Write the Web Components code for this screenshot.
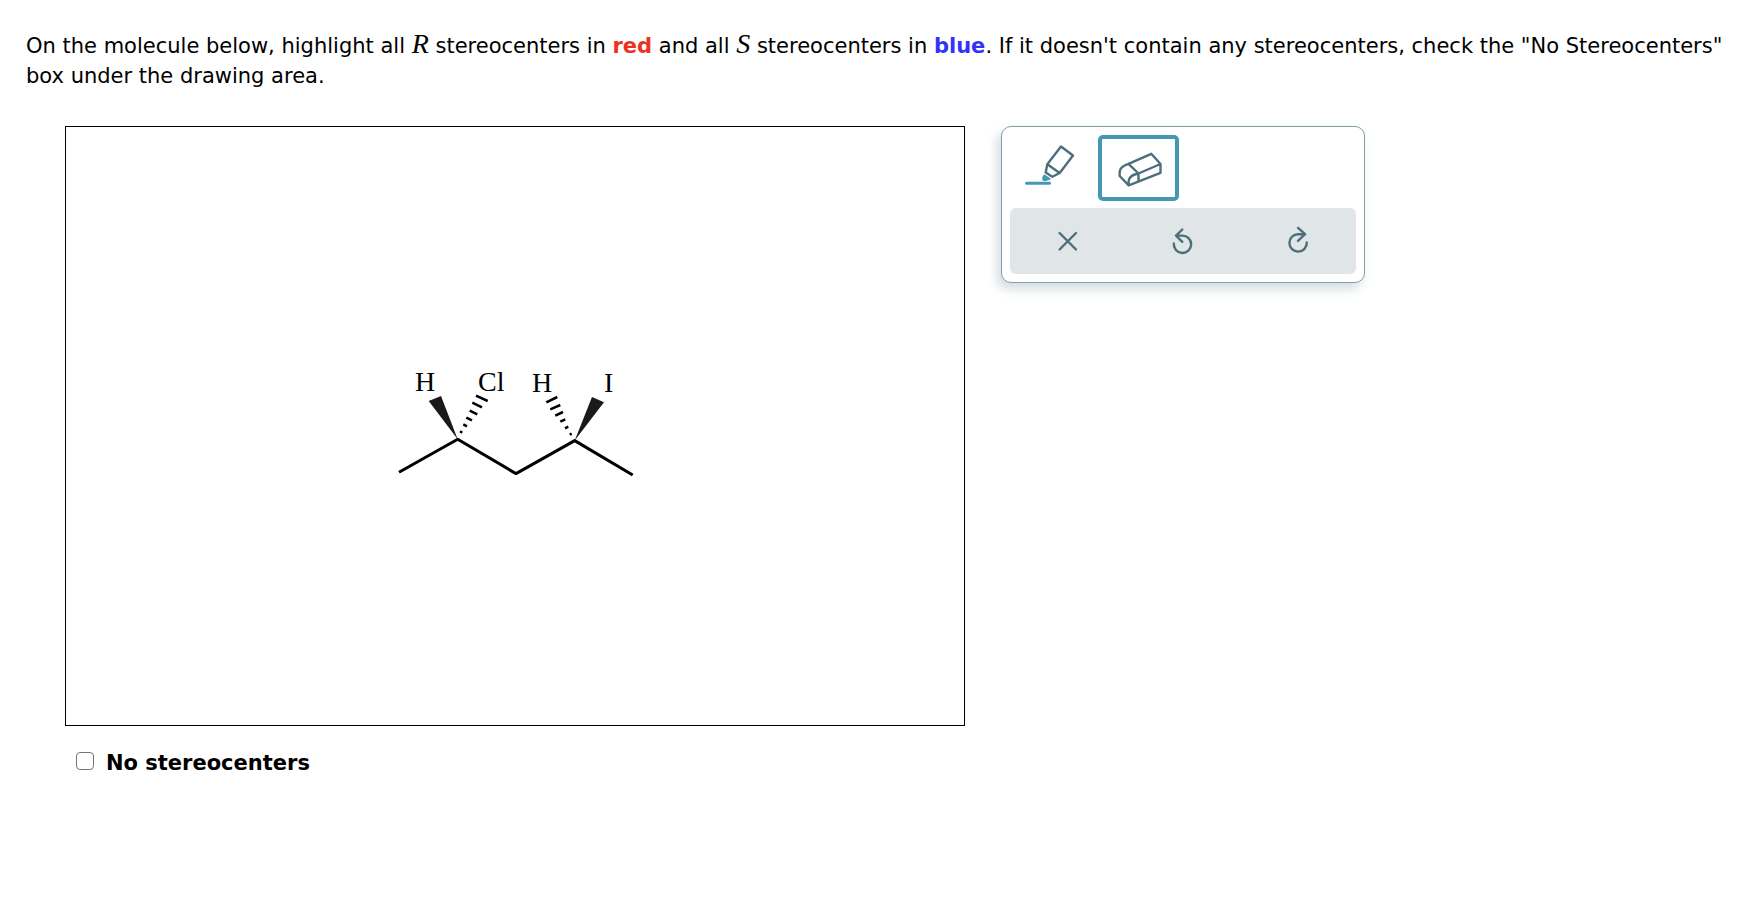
<!DOCTYPE html>
<html lang="en">
<head>
<meta charset="utf-8">
<title>Stereocenters</title>
<style>
  body { margin: 0; background: #fff; color: #000; font: 21px/30px Verdana, "DejaVu Sans", sans-serif; }
</style>
</head>
<body>
<stereo-question>
  <question-prompt slot="prompt">On the molecule below, highlight all <i>R</i> stereocenters in <b class="red">red</b> and all <i>S</i> stereocenters in <b class="blue">blue</b>. If it doesn't contain any stereocenters, check the "No Stereocenters" <span>box under the drawing area.</span></question-prompt>
  <molecule-canvas slot="canvas"></molecule-canvas>
  <tool-palette slot="tools"></tool-palette>
  <check-option slot="option">No stereocenters</check-option>
</stereo-question>
<script>
function define(name, html) {
  const template = document.createElement('template');
  template.innerHTML = html;
  customElements.define(name, class extends HTMLElement {
    constructor() {
      super();
      this.attachShadow({ mode: 'open' }).append(template.content.cloneNode(true));
    }
  });
}

define('stereo-question', `
<style>
  :host { display: block; padding: 31px 16px 31px 26px; }
  .work { display: grid; grid-template-columns: minmax(0, 900px) minmax(300px, 364px); column-gap: 36px; row-gap: 20px; align-items: start; padding: 35px 0 0 39px; }
</style>
<main>
  <slot name="prompt"></slot>
  <div class="work">
    <slot name="canvas"></slot>
    <slot name="tools"></slot>
    <slot name="option"></slot>
  </div>
</main>`);

define('question-prompt', `
<style>
  :host { display: block; }
  p { margin: 0; }
  ::slotted(i) { font: italic 28px/24px "Liberation Serif", "Times New Roman", serif; }
  ::slotted(.red) { color: #ea3323; }
  ::slotted(.blue) { color: #3333f5; }
</style>
<p><slot></slot></p>`);

define('molecule-canvas', `
<style>
  :host { display: flex; box-sizing: border-box; aspect-ratio: 3 / 2; border: 1px solid #000; align-items: center; justify-content: center; }
  svg { display: block; width: 240px; height: 120px; }
  text { font: 28px "Liberation Serif", "Times New Roman", serif; }
</style>
<svg viewBox="0 0 240 120" role="img" aria-label="2-chloro-4-iodopentane">
  <path d="M4 106.3 62.7 73.3 121 107.6 179.7 74.6 237.7 109" fill="none" stroke="#000" stroke-width="3" stroke-linejoin="round"/>
  <path d="M62.7 73.3 33.7 35 46 30ZM179.7 74.6 197 31 209 36.3Z" fill="#1a1a1a"/>
  <path d="M81 29.7 92.7 35M77.3 36.7 87 41.3M74.7 44.7 82.3 48.3M71.3 51.7 77 54.3M68.3 58.3 72 60.3M65 65.3 67.3 66.7M151.3 36.3 162.3 31M155.3 43.3 165.3 39M160.3 49.7 168 46M165.3 55.7 170.3 53.3M170 62.3 173.3 60.7M174.7 68.7 176.7 67.7" fill="none" stroke="#000" stroke-width="2.5"/>
  <text x="20" y="25">H</text>
  <text x="83" y="25">Cl</text>
  <text x="137" y="26">H</text>
  <text x="209" y="26">I</text>
</svg>`);

define('tool-palette', `
<style>
  :host { display: flex; flex-direction: column; gap: 7px; box-sizing: border-box; padding: 8px; border: 1px solid #849da6; border-radius: 10px; background: #fff; box-shadow: -4px 6px 11px #d3dde1; }
  .tools { display: flex; gap: 7px; }
  .actions { display: flex; background: #e0e6e8; border-radius: 6px; }
  button { padding: 0; border: 0; background: none; height: 66px; color: #4d6f7c; display: flex; align-items: center; justify-content: center; }
  .tools button { width: 81px; border-radius: 5px; }
  .tools button[aria-pressed=true] { box-shadow: inset 0 0 0 4px #4299b4; }
  .actions button { flex: 1; }
  svg { display: block; fill: none; stroke: currentColor; stroke-width: 2.4; stroke-linejoin: round; stroke-linecap: round; }
</style>
<div class="tools">
  <button type="button" aria-label="Highlighter" aria-pressed="false">
    <svg width="81" height="66">
      <path d="M51 11.5 63 20.5 49.7 38 37.3 29.3ZM37.3 29.3 35.7 37.5 42.3 41.7 49.7 38"/>
      <path d="M34.3 39.3 40.8 43.8C39.5 45.7 36 46 33 46 31.5 43.5 32 41.5 34.3 39.3Z" fill="#4299b4" stroke="none"/>
      <path d="M16.5 48.2H39.5" stroke="#4299b4" stroke-width="3"/>
    </svg>
  </button>
  <button type="button" aria-label="Eraser" aria-pressed="true">
    <svg width="81" height="66">
      <path d="M30.5 28.8 53.3 18.8 62.5 29V37.8L30.7 50.3 21.7 41C21.3 36 21 32 30.5 28.8L40.5 38.5 62.5 29M40.5 38.5V46.3M40.5 38.5C34 39.5 29.5 42.5 30.7 50.3"/>
    </svg>
  </button>
</div>
<div class="actions">
  <button type="button" aria-label="Clear"><svg width="32" height="32"><path d="M7.6 8 24 24.5M24 8 7.6 24.5"/></svg></button>
  <button type="button" aria-label="Undo"><svg width="32" height="32"><path d="M15.3 4.5 9 10.6 15.3 16.8M9 10.6H15.3A8.7 8.7 0 1 1 6.8 18.5"/></svg></button>
  <button type="button" aria-label="Redo"><svg width="32" height="32"><path d="M16 2.9 23.1 9.2 16 15.9M23.1 9.2H16.2A8.7 8.7 0 1 0 24.8 17.5"/></svg></button>
</div>`);

define('check-option', `
<style>
  :host { display: block; padding-left: 11px; }
  label { display: inline-flex; align-items: center; gap: 12px; font-weight: bold; line-height: 34px; }
  input { appearance: none; box-sizing: border-box; width: 18px; height: 18px; margin: 0 0 4px; border: 1px solid #767676; border-radius: 4px; background: #fff; }
  input:checked { background: #4299b4; }
</style>
<label><input type="checkbox"><span><slot></slot></span></label>`);
</script>
</body>
</html>
